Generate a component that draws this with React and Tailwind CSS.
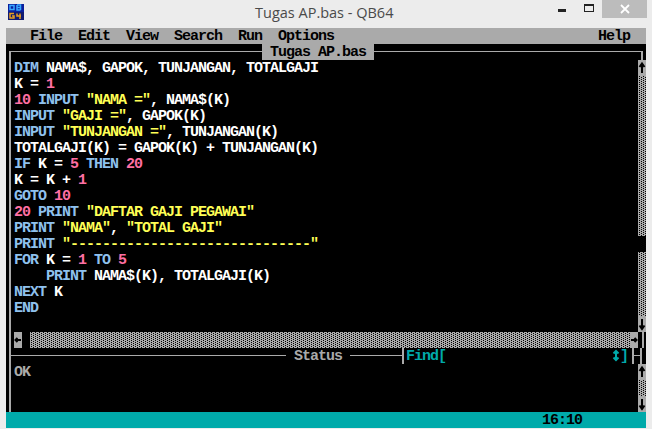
const B = 'text-[#8fc1ee]';
const N = 'text-[#ff6fa3]';
const S = 'text-[#ffff55]';
const W = 'text-white';

// each line is a list of [text, colour]
const code = [
  [['DIM', B], [' NAMA$, GAPOK, TUNJANGAN, TOTALGAJI', W]],
  [['K = ', W], ['1', N]],
  [['10', N], [' INPUT ', B], ['"NAMA ="', S], [', NAMA$(K)', W]],
  [['INPUT ', B], ['"GAJI ="', S], [', GAPOK(K)', W]],
  [['INPUT ', B], ['"TUNJANGAN ="', S], [', TUNJANGAN(K)', W]],
  [['TOTALGAJI(K) = GAPOK(K) + TUNJANGAN(K)', W]],
  [['IF', B], [' K = ', W], ['5', N], [' THEN ', B], ['20', N]],
  [['K = K + ', W], ['1', N]],
  [['GOTO ', B], ['10', N]],
  [['20', N], [' PRINT ', B], ['"DAFTAR GAJI PEGAWAI"', S]],
  [['PRINT ', B], ['"NAMA"', S], [', ', W], ['"TOTAL GAJI"', S]],
  [['PRINT ', B], ['"------------------------------"', S]],
  [['FOR', B], [' K = ', W], ['1', N], [' TO ', B], ['5', N]],
  [['    PRINT ', B], ['NAMA$(K), TOTALGAJI(K)', W]],
  [['NEXT', B], [' K', W]],
  [['END', B]],
];

const Stipple = ({ className }) => (
  <svg className={className} aria-hidden="true">
    <defs>
      <pattern id="stipple" width="4" height="2" patternUnits="userSpaceOnUse">
        <rect width="4" height="2" fill="#aaaaaa" />
        <rect x="1" y="0" width="1" height="1" fill="#000000" />
        <rect x="3" y="1" width="1" height="1" fill="#000000" />
      </pattern>
    </defs>
    <rect width="100%" height="100%" fill="url(#stipple)" />
  </svg>
);

const Arrow = ({ dir }) => {
  const paths = {
    up: 'M4 13V4M1.500 7 4 3.500 6.500 7',
    down: 'M4 3v9.500M1.500 9.500 4 13l2.500-3.500',
    left: 'M7 8H1.500M3.500 6 1.500 8l2 2',
    right: 'M1 8h5.500M4.500 6l2 2-2 2',
  };
  return (
    <div className="w-2 h-4 shrink-0 bg-[#aaaaaa]">
      <svg width="8" height="16" viewBox="0 0 8 16" fill="none" stroke="#000" strokeWidth="2">
        <path d={paths[dir]} />
      </svg>
    </div>
  );
};

const App = () => {
  return (
    <div className="w-[652px] h-[429px] overflow-hidden bg-[#ececec] font-['Open_Sans',sans-serif]">
      {/* Title bar */}
      <div className="h-7 flex items-start">
        <svg className="ml-2 mt-1 shrink-0" width="16" height="16" viewBox="0 0 16 16" aria-hidden="true">
          <rect width="16" height="16" fill="#0a1f9c" />
          <rect y="8" width="16" height="8" fill="#111a70" />
          <path d="M2 1.500h4v4H2zM9 1h3.500v5M9 1v5h3.500M9 3.500h3.500" fill="none" stroke="#38a8ff" strokeWidth="1.500" />
          <path d="M6 9.500H2v4.500h4v-2H4M9 9.500v2.500h4M12 9.500V15" fill="none" stroke="#e8a020" strokeWidth="1.500" />
        </svg>
        <div className="ml-[231px] flex-1 text-[14.5px] leading-[25px] text-[#4a4a4a]">Tugas AP.bas - QB64</div>
        <div className="w-[8px] h-[3px] bg-[#222] mt-[9px] mr-[18px]" />
        <div className="w-[8px] h-[5px] box-content border border-t-2 border-[#222] mt-[4px] mr-[8px]" />
        <div className="w-[45px] h-[18px] bg-[#bcbcbc] mr-[5px] flex items-center justify-center">
          <svg width="10" height="10" viewBox="0 0 10 10" stroke="#fff" strokeWidth="1.800"><path d="M1 1l8 8M9 1 1 9" /></svg>
        </div>
      </div>

      {/* QB64 console */}
      <div className="ml-[6px] w-[640px] h-[400px] bg-black flex flex-col font-['Liberation_Mono',monospace] font-bold text-[15px] tracking-[-1px] leading-[18px] whitespace-pre">
        {/* Menu */}
        <div className="h-4 bg-[#aaaaaa] text-black flex pl-6">
          <span className="w-[48px]">File</span>
          <span className="w-[48px]">Edit</span>
          <span className="w-[48px]">View</span>
          <span className="w-[64px]">Search</span>
          <span className="w-[40px]">Run</span>
          <span className="flex-1">Options</span>
          <span className="mr-4">Help</span>
        </div>

        {/* Top of the frame */}
        <div className="h-4 flex">
          <div className="w-[253px] ml-[3px] mt-[7px] border-t border-l-2 border-[#aaaaaa]" />
          <div className="w-[112px] pl-2 bg-[#aaaaaa] text-black">Tugas AP.bas</div>
          <div className="flex-1 mr-[3px] mt-[7px] border-t border-r-2 border-[#aaaaaa]" />
        </div>

        <div className="flex-1 ml-[3px] border-l-2 border-[#aaaaaa] flex flex-col">
          {/* Code and its scrollbar */}
          <div className="h-[272px] flex">
            <div className="flex-1 pl-[3px]">
              {code.map((line, i) => (
                <div key={i} className="h-4">
                  {line.map(([text, color], j) => (
                    <span key={j} className={color}>{text}</span>
                  ))}
                </div>
              ))}
            </div>
            <div className="w-2 flex flex-col">
              <Arrow dir="up" />
              <Stipple className="w-2 h-[160px]" />
              <div className="h-4 bg-black" />
              <Stipple className="w-2 h-[64px]" />
              <Arrow dir="down" />
            </div>
          </div>

          {/* Horizontal scrollbar */}
          <div className="h-4 flex pl-[3px]">
            <Arrow dir="left" />
            <div className="w-2" />
            <Stipple className="w-[600px] h-4" />
            <Arrow dir="right" />
            <div className="w-1" />
            <div className="w-[2px] bg-[#aaaaaa]" />
          </div>

          {/* Status line */}
          <div className="h-4 flex">
            <div className="w-[275px] h-px mt-[7px] bg-[#aaaaaa]" />
            <span className="w-[48px] ml-2 mr-2 text-[#aaaaaa]">Status</span>
            <div className="w-[52px] h-px mt-[7px] bg-[#aaaaaa]" />
            <div className="w-[2px] bg-[#aaaaaa]" />
            <div className="w-[208px] pl-[2px] text-[#00aaaa]">Find[</div>
            <svg className="shrink-0" width="8" height="16" viewBox="0 0 8 16" fill="none" stroke="#00aaaa" strokeWidth="2" aria-hidden="true">
              <path d="M4 3v9M1.500 5.500 4 3l2.500 2.500M1.500 9.500 4 12l2.500-2.500" />
            </svg>
            <span className="w-2 text-[#00aaaa]">]</span>
            <div className="w-1" />
            <div className="w-[2px] bg-[#aaaaaa]" />
            <div className="w-[6px] h-px mt-[7px] bg-[#aaaaaa]" />
            <div className="w-[2px] bg-[#aaaaaa]" />
          </div>

          {/* Output */}
          <div className="flex-1 flex">
            <div className="flex-1 pl-[3px] text-[#aaaaaa]">OK</div>
            <div className="w-2 flex flex-col">
              <Arrow dir="up" />
              <Stipple className="w-2 h-4" />
              <Arrow dir="down" />
            </div>
          </div>
        </div>

        {/* Bottom bar */}
        <div className="h-4 bg-[#00aaaa] text-black flex justify-end pr-[64px]">16:10</div>
      </div>
    </div>
  );
};

export default App;
